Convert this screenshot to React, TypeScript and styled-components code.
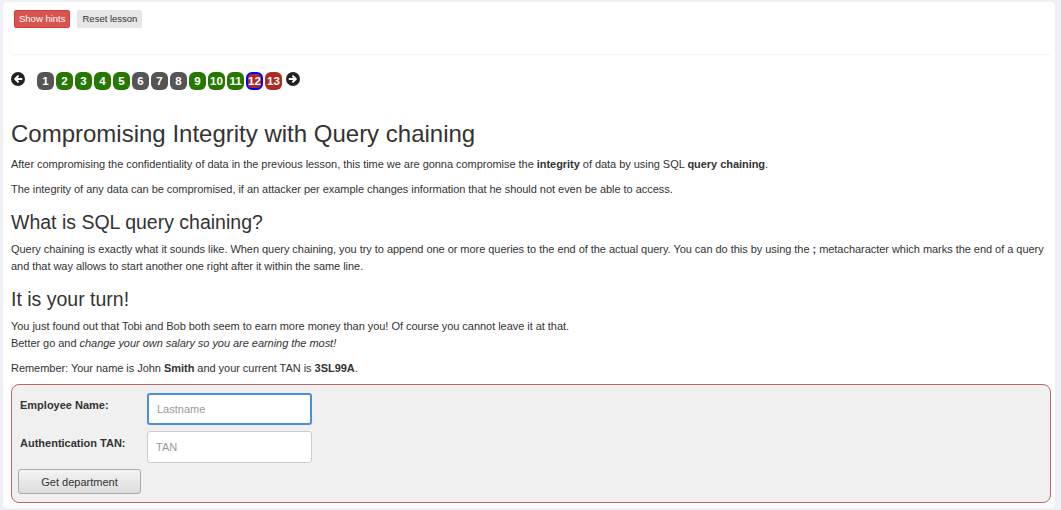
import React from "react";
import styled, { createGlobalStyle } from "styled-components";

const GlobalStyle = createGlobalStyle`
  html, body {
    margin: 0;
    padding: 0;
    background: #eef0f5;
  }
  body {
    font-family: "Liberation Sans", Arial, Helvetica, sans-serif;
    color: #333;
    font-size: 11px;
  }
`;

const Page = styled.div`
  box-sizing: border-box;
  width: 1052px;
  height: 506px;
  margin: 2px 0 0 3px;
  padding: 1px 4px 0 7px;
  background: #fff;
  border-radius: 4px;
  overflow: hidden;
`;

const Toolbar = styled.div`
  box-sizing: border-box;
  height: 51px;
  padding: 7px 4px;
  display: flex;
  align-items: flex-start;
  gap: 7px;
  border-radius: 4px;
  box-shadow: 0 1px 2px rgba(0, 0, 0, 0.06);
`;

const SmallButton = styled.button<{ $danger?: boolean }>`
  box-sizing: border-box;
  height: 18px;
  padding: 0 4px;
  font-family: inherit;
  font-size: 9.5px;
  line-height: 16px;
  border-radius: 2px;
  border: 1px solid ${(p) => (p.$danger ? "#d43f3a" : "#e6e6e6")};
  background: ${(p) => (p.$danger ? "#d9534f" : "#e6e6e6")};
  color: ${(p) => (p.$danger ? "#fff" : "#333")};
`;

const Pager = styled.div`
  display: flex;
  align-items: center;
  height: 20px;
  margin-top: 17px;
  padding-left: 1px;
`;

const Arrow = styled.span<{ $right?: boolean }>`
  display: inline-flex;
  width: 14px;
  height: 14px;
  margin-top: -4px;
  margin-right: ${(p) => (p.$right ? "0" : "12px")};
  margin-left: ${(p) => (p.$right ? "2px" : "0")};
`;

const Pill = styled.span<{ $state: "done" | "todo" | "fail"; $current?: boolean }>`
  box-sizing: border-box;
  display: inline-flex;
  align-items: center;
  justify-content: center;
  width: 17px;
  height: 18px;
  margin-right: 2px;
  border-radius: 6px;
  font-size: 11.5px;
  font-weight: bold;
  color: #fff;
  background: ${(p) =>
    p.$state === "done" ? "#267800" : p.$state === "fail" ? "#b02a24" : "#555"};
  border: ${(p) => (p.$current ? "2px solid #0000ff" : "none")};
`;

const Title = styled.h1`
  margin: 29px 0 0 1px;
  font-size: 24px;
  font-weight: normal;
  line-height: 28px;
  color: #333;
`;

const SubTitle = styled.h2`
  margin: 13px 0 0 1px;
  font-size: 19.5px;
  font-weight: normal;
  line-height: 22px;
  color: #333;
`;

const Text = styled.p`
  margin: 8px 0 0 1px;
  font-size: 11px;
  line-height: 17px;
  letter-spacing: -0.04px;
`;

const Form = styled.div`
  box-sizing: border-box;
  margin: 7px 0 0 1px;
  width: 1040px;
  height: 119px;
  padding: 8px 7px;
  background: #f0f0f0;
  border: 1px solid #b46a6a;
  border-radius: 8px;
`;

const FormRow = styled.div`
  display: grid;
  grid-template-columns: 128px 165px;
  align-items: center;
  margin-bottom: 6px;
`;

const Label = styled.label`
  font-weight: bold;
  font-size: 11px;
  padding-left: 1px;
  margin-top: -8px;
`;

const Input = styled.input<{ $focused?: boolean }>`
  box-sizing: border-box;
  height: 32px;
  padding: 0 8px;
  font-family: inherit;
  font-size: 11px;
  color: #333;
  background: #fff;
  border-radius: 3px;
  outline: none;
  border: ${(p) => (p.$focused ? "2px solid #4a8fdc" : "1px solid #ccc")};
  &::placeholder {
    color: #999;
  }
`;

const SubmitButton = styled.button`
  box-sizing: border-box;
  width: 123px;
  height: 25px;
  margin: 0 0 0 -1px;
  font-family: inherit;
  font-size: 11px;
  color: #333;
  border: 1px solid #aaa;
  border-radius: 3px;
  background: linear-gradient(#f4f4f4, #dcdcdc);
`;

const ArrowIcon = ({ right }: { right?: boolean }) => (
  <Arrow $right={right}>
    <svg width="14" height="14" viewBox="0 0 14 14">
      <circle cx="7" cy="7" r="7" fill="#222" />
      <g transform={right ? "" : "rotate(180 7 7)"}>
        <path d="M3.5 7 H9.5 M7 4.3 L9.8 7 L7 9.7" stroke="#fff" strokeWidth="2" fill="none" strokeLinecap="round" strokeLinejoin="round" />
      </g>
    </svg>
  </Arrow>
);

const lessons: ("done" | "todo" | "fail")[] = [
  "todo", "done", "done", "done", "done", "todo", "todo", "todo",
  "done", "done", "done", "fail", "fail",
];

const App = () => (
  <>
    <GlobalStyle />
    <Page>
      <Toolbar>
        <SmallButton $danger>Show hints</SmallButton>
        <SmallButton>Reset lesson</SmallButton>
      </Toolbar>
      <Pager>
        <ArrowIcon />
        {lessons.map((s, i) => (
          <Pill key={i} $state={s} $current={i === 11}>
            {i + 1}
          </Pill>
        ))}
        <ArrowIcon right />
      </Pager>
      <Title>Compromising Integrity with Query chaining</Title>
      <Text>
        After compromising the confidentiality of data in the previous lesson, this time we are gonna compromise the{" "}
        <b>integrity</b> of data by using SQL <b>query chaining</b>.
      </Text>
      <Text>
        The integrity of any data can be compromised, if an attacker per example changes information that he should not even be able to access.
      </Text>
      <SubTitle>What is SQL query chaining?</SubTitle>
      <Text>
        Query chaining is exactly what it sounds like. When query chaining, you try to append one or more queries to the end of the actual query. You can do this by using the{" "}
        <b>;</b> metacharacter which marks the end of a query and that way allows to start another one right after it within the same line.
      </Text>
      <SubTitle>It is your turn!</SubTitle>
      <Text>
        You just found out that Tobi and Bob both seem to earn more money than you! Of course you cannot leave it at that.
        <br />
        Better go and <i>change your own salary so you are earning the most!</i>
      </Text>
      <Text>
        Remember: Your name is John <b>Smith</b> and your current TAN is <b>3SL99A</b>.
      </Text>
      <Form>
        <FormRow>
          <Label>Employee Name:</Label>
          <Input $focused placeholder="Lastname" />
        </FormRow>
        <FormRow>
          <Label>Authentication TAN:</Label>
          <Input placeholder="TAN" />
        </FormRow>
        <SubmitButton>Get department</SubmitButton>
      </Form>
    </Page>
  </>
);

export default App;
